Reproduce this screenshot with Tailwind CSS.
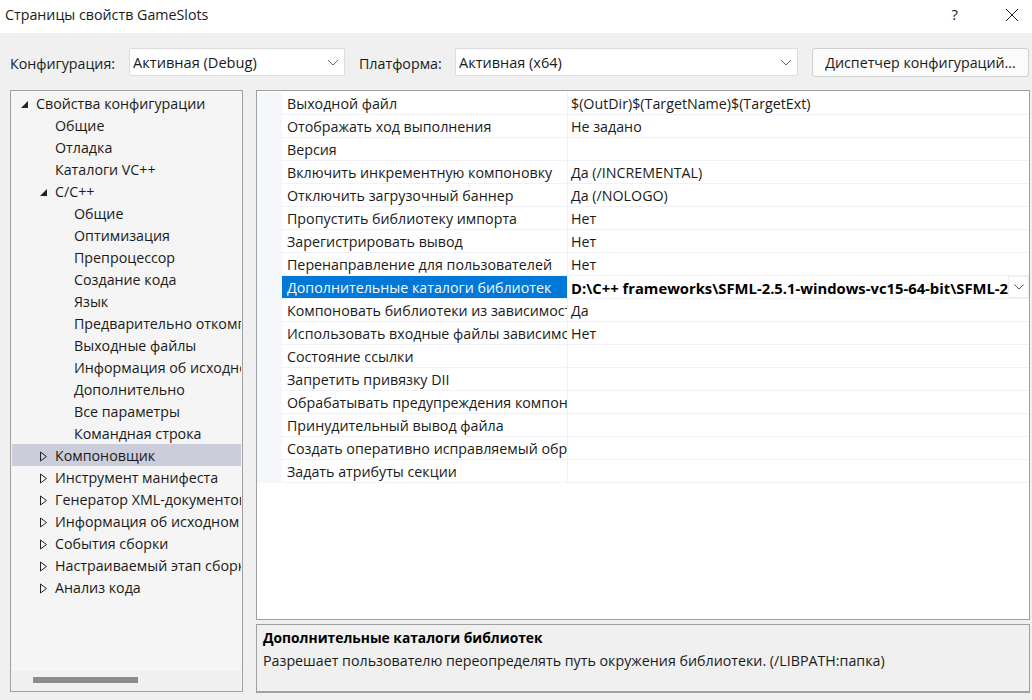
<!doctype html>
<html lang="ru">
  <head>
    <meta charset="UTF-8" />
    <title>Страницы свойств GameSlots</title>
    <script src="https://cdn.jsdelivr.net/npm/@tailwindcss/browser@4"></script>
  </head>
  <body class="w-[1032px] h-[700px] overflow-hidden bg-[#f0f0f0] font-['Open_Sans',sans-serif] text-[14.25px] text-[#1a1a1a]">
    <!-- Title bar -->
    <div class="h-[33px] bg-white flex items-center justify-between pl-[5px] pb-[4px]">
      <span>Страницы свойств GameSlots</span>
      <div class="flex items-center">
        <span class="text-[15px] mr-[48px]">?</span>
        <svg class="mr-[14px]" width="12" height="12" viewBox="0 0 12 12" fill="none" stroke="#222" stroke-width="1"><path d="M0 0L12 12M12 0L0 12" /></svg>
      </div>
    </div>

    <!-- Toolbar -->
    <div class="h-[57px] flex items-center pl-[10px] pt-[1px]">
      <span class="w-[119px] pt-[3px]">Конфигурация:</span>
      <div class="w-[216px] h-[28px] bg-white border border-[#dcdcdc] rounded-[2px] flex items-center justify-between pl-[3px] pr-[5px]">
        <span class="text-[14.6px] pt-[2px]">Активная (Debug)</span>
        <svg width="12" height="7" viewBox="0 0 12 7" fill="none" stroke="#666"><path d="M1 1L6 6L11 1" /></svg>
      </div>
      <span class="ml-[14px] w-[96px] pt-[3px]">Платформа:</span>
      <div class="w-[343px] h-[28px] bg-white border border-[#dcdcdc] rounded-[2px] flex items-center justify-between pl-[3px] pr-[5px]">
        <span class="text-[14.5px] pt-[2px]">Активная (x64)</span>
        <svg width="12" height="7" viewBox="0 0 12 7" fill="none" stroke="#666"><path d="M1 1L6 6L11 1" /></svg>
      </div>
      <button class="ml-[14px] w-[217px] h-[29px] bg-[#fbfbfb] border border-[#cfcfcf] rounded-[3px] text-center pt-[1px]">Диспетчер конфигураций...</button>
    </div>

    <div class="flex pl-[10px] pr-[2px] gap-[13px]">
      <!-- Tree -->
      <div class="w-[233px] h-[602px] shrink-0 border border-[#a0a0a0] bg-[#f5f5f5] flex flex-col justify-between overflow-hidden">
        <div class="pt-[1px] pl-[1px] pr-[1px] leading-[22px] whitespace-nowrap">
          <div class="h-[22px] pt-[2px] flex items-center pl-[8px] overflow-hidden"><svg class="mr-[7px]" width="9" height="9" viewBox="0 0 9 9"><path d="M8 1V8H1Z" fill="#222" /></svg>Свойства конфигурации</div>
          <div class="h-[22px] pt-[1px] pl-[43px] overflow-hidden">Общие</div>
          <div class="h-[22px] pt-[1px] pl-[43px] overflow-hidden">Отладка</div>
          <div class="h-[22px] pt-[1px] pl-[43px] overflow-hidden">Каталоги VC++</div>
          <div class="h-[22px] pt-[2px] flex items-center pl-[27px] overflow-hidden"><svg class="mr-[7px]" width="9" height="9" viewBox="0 0 9 9"><path d="M8 1V8H1Z" fill="#222" /></svg>C/C++</div>
          <div class="h-[22px] pt-[1px] pl-[62px] overflow-hidden">Общие</div>
          <div class="h-[22px] pt-[1px] pl-[62px] overflow-hidden">Оптимизация</div>
          <div class="h-[22px] pt-[1px] pl-[62px] overflow-hidden">Препроцессор</div>
          <div class="h-[22px] pt-[1px] pl-[62px] overflow-hidden">Создание кода</div>
          <div class="h-[22px] pt-[1px] pl-[62px] overflow-hidden">Язык</div>
          <div class="h-[22px] pt-[1px] pl-[62px] overflow-hidden">Предварительно откомпилированные</div>
          <div class="h-[22px] pt-[1px] pl-[62px] overflow-hidden">Выходные файлы</div>
          <div class="h-[22px] pt-[1px] pl-[62px] overflow-hidden">Информация об исходном коде</div>
          <div class="h-[22px] pt-[1px] pl-[62px] overflow-hidden">Дополнительно</div>
          <div class="h-[22px] pt-[1px] pl-[62px] overflow-hidden">Все параметры</div>
          <div class="h-[22px] pt-[1px] pl-[62px] overflow-hidden">Командная строка</div>
          <div class="h-[22px] pt-[2px] flex items-center pl-[27px] bg-[#cbcdda] overflow-hidden"><svg class="mr-[7px]" width="9" height="11" viewBox="0 0 9 11" fill="none" stroke="#222"><path d="M1.5 1V10L7.5 5.5Z" /></svg>Компоновщик</div>
          <div class="h-[22px] pt-[2px] flex items-center pl-[27px] overflow-hidden"><svg class="mr-[7px] shrink-0" width="9" height="11" viewBox="0 0 9 11" fill="none" stroke="#222"><path d="M1.5 1V10L7.5 5.5Z" /></svg>Инструмент манифеста</div>
          <div class="h-[22px] pt-[2px] flex items-center pl-[27px] overflow-hidden"><svg class="mr-[7px] shrink-0" width="9" height="11" viewBox="0 0 9 11" fill="none" stroke="#222"><path d="M1.5 1V10L7.5 5.5Z" /></svg>Генератор XML-документов</div>
          <div class="h-[22px] pt-[2px] flex items-center pl-[27px] overflow-hidden"><svg class="mr-[7px] shrink-0" width="9" height="11" viewBox="0 0 9 11" fill="none" stroke="#222"><path d="M1.5 1V10L7.5 5.5Z" /></svg>Информация об исходном коде</div>
          <div class="h-[22px] pt-[2px] flex items-center pl-[27px] overflow-hidden"><svg class="mr-[7px] shrink-0" width="9" height="11" viewBox="0 0 9 11" fill="none" stroke="#222"><path d="M1.5 1V10L7.5 5.5Z" /></svg>События сборки</div>
          <div class="h-[22px] pt-[2px] flex items-center pl-[27px] overflow-hidden"><svg class="mr-[7px] shrink-0" width="9" height="11" viewBox="0 0 9 11" fill="none" stroke="#222"><path d="M1.5 1V10L7.5 5.5Z" /></svg>Настраиваемый этап сборки</div>
          <div class="h-[22px] pt-[2px] flex items-center pl-[27px] overflow-hidden"><svg class="mr-[7px] shrink-0" width="9" height="11" viewBox="0 0 9 11" fill="none" stroke="#222"><path d="M1.5 1V10L7.5 5.5Z" /></svg>Анализ кода</div>
        </div>
        <!-- Horizontal scrollbar -->
        <div class="h-[22px] mx-[1px] bg-[#f0f0f0] border-t border-[#fafafa] pt-[7px] pl-[21px]">
          <div class="w-[105px] h-[6px] bg-[#8c8c8c]"></div>
        </div>
      </div>

      <!-- Right column -->
      <div class="flex-1 min-w-0 flex flex-col gap-[4px]">
        <div class="h-[530px] border border-[#a0a0a0] bg-white pt-[1px]">
          <div class="flex">
            <div class="w-[25px] bg-[#f5f7fb] shrink-0"></div>
            <div class="flex-1 min-w-0 leading-[22px]">
              <div class="flex h-[23px] border-b border-[#f0f2f8]"><div class="w-[286px] pt-[1px] pl-[5px] border-r border-[#f0f2f8] overflow-hidden whitespace-nowrap">Выходной файл</div><div class="flex-1 min-w-0 pt-[1px] pl-[3px] overflow-hidden whitespace-nowrap">$(OutDir)$(TargetName)$(TargetExt)</div></div>
              <div class="flex h-[23px] border-b border-[#f0f2f8]"><div class="w-[286px] pt-[1px] pl-[5px] border-r border-[#f0f2f8] overflow-hidden whitespace-nowrap">Отображать ход выполнения</div><div class="flex-1 min-w-0 pt-[1px] pl-[3px] overflow-hidden whitespace-nowrap">Не задано</div></div>
              <div class="flex h-[23px] border-b border-[#f0f2f8]"><div class="w-[286px] pt-[1px] pl-[5px] border-r border-[#f0f2f8] overflow-hidden whitespace-nowrap">Версия</div><div class="flex-1 min-w-0"></div></div>
              <div class="flex h-[23px] border-b border-[#f0f2f8]"><div class="w-[286px] pt-[1px] pl-[5px] border-r border-[#f0f2f8] overflow-hidden whitespace-nowrap">Включить инкрементную компоновку</div><div class="flex-1 min-w-0 pt-[1px] pl-[3px] overflow-hidden whitespace-nowrap">Да (/INCREMENTAL)</div></div>
              <div class="flex h-[23px] border-b border-[#f0f2f8]"><div class="w-[286px] pt-[1px] pl-[5px] border-r border-[#f0f2f8] overflow-hidden whitespace-nowrap">Отключить загрузочный баннер</div><div class="flex-1 min-w-0 pt-[1px] pl-[3px] overflow-hidden whitespace-nowrap">Да (/NOLOGO)</div></div>
              <div class="flex h-[23px] border-b border-[#f0f2f8]"><div class="w-[286px] pt-[1px] pl-[5px] border-r border-[#f0f2f8] overflow-hidden whitespace-nowrap">Пропустить библиотеку импорта</div><div class="flex-1 min-w-0 pt-[1px] pl-[3px] overflow-hidden whitespace-nowrap">Нет</div></div>
              <div class="flex h-[23px] border-b border-[#f0f2f8]"><div class="w-[286px] pt-[1px] pl-[5px] border-r border-[#f0f2f8] overflow-hidden whitespace-nowrap">Зарегистрировать вывод</div><div class="flex-1 min-w-0 pt-[1px] pl-[3px] overflow-hidden whitespace-nowrap">Нет</div></div>
              <div class="flex h-[23px] border-b border-[#f0f2f8]"><div class="w-[286px] pt-[1px] pl-[5px] border-r border-[#f0f2f8] overflow-hidden whitespace-nowrap">Перенаправление для пользователей</div><div class="flex-1 min-w-0 pt-[1px] pl-[3px] overflow-hidden whitespace-nowrap">Нет</div></div>
              <!-- Selected row -->
              <div class="flex h-[23px] border-b border-[#f0f2f8]">
                <div class="w-[286px] pt-[1px] pl-[5px] bg-[#0078d7] border-r border-white text-[#f4f8fc] overflow-hidden whitespace-nowrap">Дополнительные каталоги библиотек</div>
                <div class="relative flex-1 min-w-0 pt-[1px] pl-[3px] overflow-hidden whitespace-nowrap font-bold text-[14.8px] text-black">D:\C++ frameworks\SFML-2.5.1-windows-vc15-64-bit\SFML-2.5.1\lib
                  <div class="absolute right-0 top-0 w-[21px] h-[22px] bg-white border border-[#ececec] flex items-center justify-center"><svg width="10" height="6" viewBox="0 0 10 6" fill="none" stroke="#555"><path d="M.5 .5L5 5L9.5 .5" /></svg></div>
                </div>
              </div>
              <div class="flex h-[23px] border-b border-[#f0f2f8]"><div class="w-[286px] pt-[1px] pl-[5px] border-r border-[#f0f2f8] overflow-hidden whitespace-nowrap">Компоновать библиотеки из зависимостей</div><div class="flex-1 min-w-0 pt-[1px] pl-[3px] overflow-hidden whitespace-nowrap">Да</div></div>
              <div class="flex h-[23px] border-b border-[#f0f2f8]"><div class="w-[286px] pt-[1px] pl-[5px] border-r border-[#f0f2f8] overflow-hidden whitespace-nowrap">Использовать входные файлы зависимостей</div><div class="flex-1 min-w-0 pt-[1px] pl-[3px] overflow-hidden whitespace-nowrap">Нет</div></div>
              <div class="flex h-[23px] border-b border-[#f0f2f8]"><div class="w-[286px] pt-[1px] pl-[5px] border-r border-[#f0f2f8] overflow-hidden whitespace-nowrap">Состояние ссылки</div><div class="flex-1 min-w-0"></div></div>
              <div class="flex h-[23px] border-b border-[#f0f2f8]"><div class="w-[286px] pt-[1px] pl-[5px] border-r border-[#f0f2f8] overflow-hidden whitespace-nowrap">Запретить привязку DII</div><div class="flex-1 min-w-0"></div></div>
              <div class="flex h-[23px] border-b border-[#f0f2f8]"><div class="w-[286px] pt-[1px] pl-[5px] border-r border-[#f0f2f8] overflow-hidden whitespace-nowrap">Обрабатывать предупреждения компоновщика</div><div class="flex-1 min-w-0"></div></div>
              <div class="flex h-[23px] border-b border-[#f0f2f8]"><div class="w-[286px] pt-[1px] pl-[5px] border-r border-[#f0f2f8] overflow-hidden whitespace-nowrap">Принудительный вывод файла</div><div class="flex-1 min-w-0"></div></div>
              <div class="flex h-[23px] border-b border-[#f0f2f8]"><div class="w-[286px] pt-[1px] pl-[5px] border-r border-[#f0f2f8] overflow-hidden whitespace-nowrap">Создать оперативно исправляемый образ</div><div class="flex-1 min-w-0"></div></div>
              <div class="flex h-[23px] border-b border-[#f0f2f8]"><div class="w-[286px] pt-[1px] pl-[5px] border-r border-[#f0f2f8] overflow-hidden whitespace-nowrap">Задать атрибуты секции</div><div class="flex-1 min-w-0"></div></div>
            </div>
          </div>
        </div>

        <!-- Description -->
        <div class="h-[69px] border border-[#a0a0a0] border-b-2 bg-[#f0f0f0] px-[6px] pt-[2px]">
          <div class="font-bold text-[13.8px] text-black leading-[22px]">Дополнительные каталоги библиотек</div>
          <div class="leading-[22px] pt-[1px]">Разрешает пользователю переопределять путь окружения библиотеки. (/LIBPATH:папка)</div>
        </div>
      </div>
    </div>
  </body>
</html>
